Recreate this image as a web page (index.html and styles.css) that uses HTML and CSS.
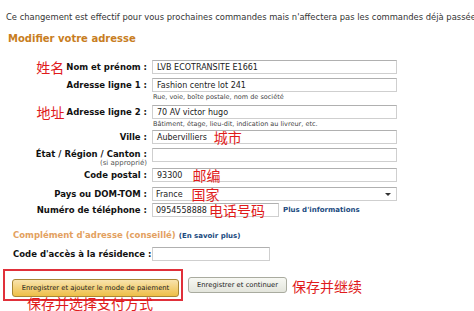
FILE: index.html
```html
<!DOCTYPE html>
<html>
<head>
<meta charset="utf-8">
<link rel="stylesheet" href="styles.css">
</head>
<body>
<div class="page">
  <p class="notice">Ce changement est effectif pour vous prochaines commandes mais n'affectera pas les commandes déjà passées</p>
  <h1 class="title">Modifier votre adresse</h1>

  <div class="form">
    <div class="label"><span class="cn cn-lbl">姓名</span>Nom et prénom :</div>
    <div class="field"><div class="input">LVB ECOTRANSITE E1661</div></div>

    <div class="label">Adresse ligne 1 :</div>
    <div class="field"><div class="input">Fashion centre lot 241</div><div class="hint">Rue, voie, boîte postale, nom de société</div></div>

    <div class="label"><span class="cn cn-lbl">地址</span>Adresse ligne 2 :</div>
    <div class="field"><div class="input">70 AV victor hugo</div><div class="hint">Bâtiment, étage, lieu-dit, indication au livreur, etc.</div></div>

    <div class="label">Ville :</div>
    <div class="field"><div class="input">Aubervilliers<span class="cn cn-in cn-ville">城市</span></div></div>

    <div class="label label-2">État / Région / Canton :<span class="sub">(si approprié)</span></div>
    <div class="field"><div class="input"></div></div>

    <div class="label">Code postal :</div>
    <div class="field"><div class="input">93300<span class="cn cn-in cn-cp">邮编</span></div></div>

    <div class="label">Pays ou DOM-TOM :</div>
    <div class="field"><div class="input select">France<span class="cn cn-in cn-pays">国家</span><span class="arrow"></span></div></div>

    <div class="label">Numéro de téléphone :</div>
    <div class="field field-row"><div class="input short">0954558888<span class="cn cn-in cn-tel">电话号码</span></div><a class="link">Plus d'informations</a></div>
  </div>

  <div class="section">Complément d'adresse (conseillé) <a class="link">(En savoir plus)</a></div>

  <div class="form form-2">
    <div class="label label-left">Code d'accès à la résidence :</div>
    <div class="field"><div class="input short2"></div></div>
  </div>

  <div class="actions">
    <div class="highlight"><button class="btn btn-primary">Enregistrer et ajouter le mode de paiement</button></div>
    <button class="btn btn-secondary">Enregistrer et continuer</button>
    <span class="cn cn-btn">保存并继续</span>
  </div>
  <div class="cn cn-under">保存并选择支付方式</div>
</div>
</body>
</html>
```
FILE: styles.css
```css
html, body {
  margin: 0;
  padding: 0;
  background: #fff;
}
body {
  font-family: "DejaVu Sans", Verdana, sans-serif;
  color: #222;
  width: 474px;
  height: 311px;
  overflow: hidden;
}
.page {
  padding: 12px 0 0 6px;
}
.notice {
  margin: 0;
  font-size: 8.4px;
  line-height: 10px;
  white-space: nowrap;
  color: #333;
}
.title {
  margin: 10px 0 0 2px;
  font-size: 10px;
  line-height: 13px;
  font-weight: bold;
  color: #c87d22;
}
.form {
  display: grid;
  grid-template-columns: 141px 245px;
  grid-template-rows: 18px 27px 25px 18px 20px 19px 16px 14px;
  column-gap: 5px;
  align-items: start;
  margin-top: 15px;
}
.label {
  display: flex;
  align-items: center;
  justify-content: flex-end;
  font-size: 8.5px;
  font-weight: bold;
  height: 14px;
  white-space: nowrap;
  color: #111;
}
.label-2 {
  flex-direction: column;
  align-items: flex-end;
  justify-content: flex-start;
  height: auto;
  line-height: 10px;
  padding-top: 1px;
}
.sub {
  font-size: 7px;
  font-weight: normal;
  color: #555;
  line-height: 8px;
}
.label-left {
  justify-content: flex-start;
  padding-left: 7px;
}
.field {
  display: flex;
  flex-direction: column;
}
.field-row {
  flex-direction: row;
  align-items: center;
}
.input {
  position: relative;
  display: flex;
  align-items: center;
  box-sizing: border-box;
  height: 14px;
  border: 1px solid #cfcfcf;
  border-top-color: #b0b0b0;
  background: #fff;
  font-size: 8px;
  padding: 0 4px;
  color: #222;
  white-space: nowrap;
}
.select {
  padding-left: 3px;
}
.arrow {
  position: absolute;
  right: 5px;
  top: 5px;
  width: 0;
  height: 0;
  border-left: 3px solid transparent;
  border-right: 3px solid transparent;
  border-top: 3px solid #333;
}
.short {
  width: 127px;
  padding-left: 3px;
}
.short2 {
  width: 118px;
}
.hint {
  font-size: 6.5px;
  line-height: 9px;
  margin-top: 1px;
  color: #444;
  white-space: nowrap;
  padding-left: 1px;
}
.link {
  font-size: 7px;
  font-weight: bold;
  color: #1a4a80;
  margin-left: 4px;
  white-space: nowrap;
}
.cn {
  font-family: "Noto Sans CJK SC", sans-serif;
  color: #e01b1b;
  font-weight: normal;
}
.cn-lbl {
  font-size: 14px;
  line-height: 14px;
  margin-right: 2px;
}
.cn-in {
  font-size: 14px;
  line-height: 14px;
}
.cn-ville { margin-left: 7px; }
.cn-cp { margin-left: 10px; }
.cn-pays { margin-left: 9px; }
.cn-tel { margin-left: 2px; }
.section {
  margin: 12px 0 0 7px;
  font-size: 8.5px;
  font-weight: bold;
  color: #e3a15f;
  line-height: 12px;
}
.section .link {
  margin-left: 0;
}
.form-2 {
  grid-template-rows: 14px;
  margin-top: 5px;
}
.actions {
  display: flex;
  align-items: center;
  margin-top: 8px;
  margin-left: -3px;
}
.highlight {
  border: 2px solid #e0303a;
  padding: 4px 2px 2px 7px;
}
.btn {
  font-family: "DejaVu Sans", Verdana, sans-serif;
  font-size: 6.8px;
  height: 18px;
  padding: 0 4px;
  border-radius: 3px;
  color: #222;
  cursor: pointer;
  white-space: nowrap;
}
.btn-primary {
  width: 167px;
  background: linear-gradient(#f8e3ad, #eebf47);
  border: 1px solid #a88734;
}
.btn-secondary {
  margin-left: 5px;
  width: 99px;
  height: 16px;
  background: linear-gradient(#f7f8f3, #e3e5dc);
  border: 1px solid #a9ab9f;
}
.cn-btn {
  font-size: 14px;
  margin-left: 5px;
  line-height: 16px;
  margin-top: 2px;
}
.cn-under {
  font-size: 14px;
  line-height: 14px;
  margin: -5px 0 0 21px;
}
```
